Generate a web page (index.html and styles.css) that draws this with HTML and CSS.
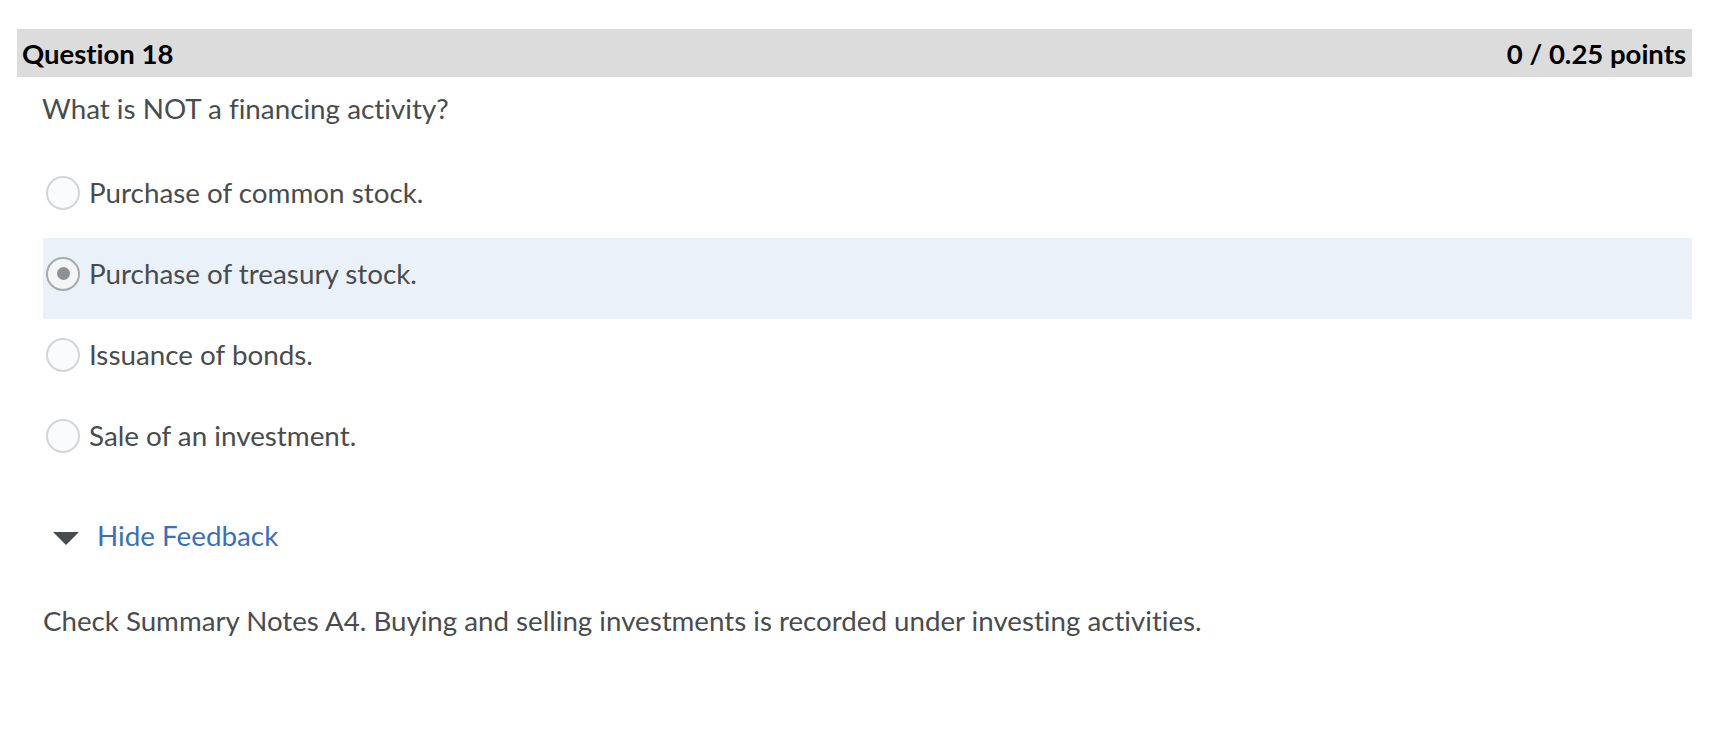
FILE: index.html
```html
<!DOCTYPE html>
<html lang="en">
<head>
    <meta charset="UTF-8">
    <meta name="viewport" content="width=device-width, initial-scale=1.0">
    <title>Question 18</title>
    <link rel="stylesheet" href="styles.css">
</head>
<body>

    <div class="quiz">
        <div class="question-header">
            <h2 class="question-title">Question 18</h2>
            <span class="question-score">0 / 0.25 points</span>
        </div>

        <div class="question-body">
            <p class="question-text">What is NOT a financing activity?</p>

            <ul class="options">
                <li class="option">
                    <span class="radio"></span>
                    <span class="option-label">Purchase of common stock.</span>
                </li>
                <li class="option selected">
                    <span class="radio"></span>
                    <span class="option-label">Purchase of treasury stock.</span>
                </li>
                <li class="option">
                    <span class="radio"></span>
                    <span class="option-label">Issuance of bonds.</span>
                </li>
                <li class="option">
                    <span class="radio"></span>
                    <span class="option-label">Sale of an investment.</span>
                </li>
            </ul>

            <a class="feedback-toggle" href="#">
                <span class="caret"></span>
                <span>Hide Feedback</span>
            </a>

            <p class="feedback-text">Check Summary Notes A4. Buying and selling investments is recorded under investing activities.</p>
        </div>
    </div>

</body>
</html>
```

FILE: styles.css
```css
/* page */
body {
    margin: 0;
    background: #fff;
    font-family: Lato, "Open Sans", "Liberation Sans", sans-serif;
    font-variant-ligatures: no-common-ligatures;
    color: #494c4e;
}

.quiz {
    padding: 29px 42px 0 17px;
}

/* grey question bar */
.question-header {
    display: flex;
    justify-content: space-between;
    align-items: center;
    height: 48px;
    padding: 0 6px 0 5px;
    background: #dcdcdc;
    color: #000;
    font-weight: bold;
    font-size: 27.5px;
}
.question-title {
    margin: 0;
    font-size: inherit;
}

/* body */
.question-body {
    padding-left: 26px;
}
.question-text {
    margin: 11px 0 0 -1px;
    font-size: 27.8px;
    line-height: 1.5;
}

/* answer options */
.options {
    list-style: none;
    margin: 27px 0 0;
    padding: 0;
}
.option {
    display: flex;
    align-items: center;
    height: 81px;
    box-sizing: border-box;
    padding: 19px 0 28px 3px;
    font-size: 27.8px;
    line-height: 34px;
}
.option.selected {
    background: #ebf1f9;
}
.radio {
    width: 34px;
    height: 34px;
    box-sizing: border-box;
    border: 2px solid #d3d6d9;
    border-radius: 50%;
    background: #fafbfc;
    margin-right: 9px;
    flex-shrink: 0;
    display: flex;
    align-items: center;
    justify-content: center;
}
.option.selected .radio {
    border-color: #a8abae;
    background: #f4f5f6;
}
.option.selected .radio::after {
    content: "";
    width: 13px;
    height: 13px;
    border-radius: 50%;
    background: #8e9194;
}

/* feedback */
.feedback-toggle {
    display: flex;
    align-items: center;
    margin: 38px 0 0 10px;
    font-size: 27.8px;
    line-height: 34px;
    color: #3b70b8;
    text-decoration: none;
}
.caret {
    width: 0;
    height: 0;
    border-left: 13px solid transparent;
    border-right: 13px solid transparent;
    border-top: 13px solid #494c4e;
    margin: 6px 18px 0 0;
}
.feedback-text {
    margin: 51px 0 0 0;
    font-size: 27.7px;
    line-height: 34px;
}
```
